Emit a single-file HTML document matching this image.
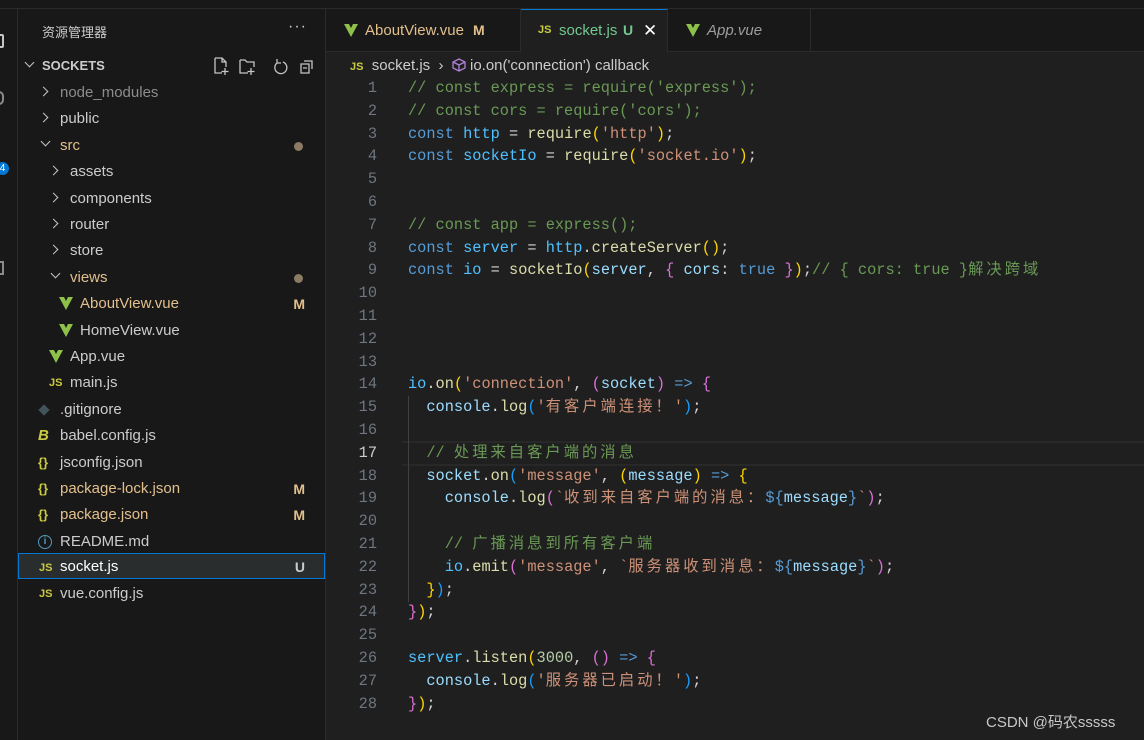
<!DOCTYPE html>
<html><head><meta charset="utf-8"><style>
*{margin:0;padding:0;box-sizing:border-box}
body{width:1144px;height:740px;overflow:hidden;background:#1f1f1f;position:relative;font-family:"Liberation Sans","Noto Sans CJK SC",sans-serif;color:#cccccc}
.abs{position:absolute}
#top{left:0;top:0;width:1144px;height:9px;background:#181818;border-bottom:1px solid #2b2b2b}
#act{left:0;top:9px;width:18px;height:731px;background:#181818;border-right:1px solid #2b2b2b}
#side{left:18px;top:9px;width:308px;height:731px;background:#181818;border-right:1px solid #2b2b2b}
.row{position:absolute;left:18px;width:307px;height:26px;font-size:15px;line-height:26px;white-space:nowrap}
.chev{position:absolute;top:8px;width:7px;height:7px;border-right:1.5px solid #c5c5c5;border-bottom:1.5px solid #c5c5c5}
.r{transform:rotate(-45deg)}
.d{transform:rotate(45deg);top:5px}
.badge{position:absolute;right:20px;font-weight:bold;font-size:14px}
.dot{position:absolute;right:22px;top:9px;width:9px;height:9px;border-radius:50%;background:#8b7b63}
.js{font-weight:bold;font-size:11px;color:#cbcb41;position:absolute}
.br{font-weight:bold;font-size:13px;color:#cbcb41;position:absolute}
#tabs{left:326px;top:9px;width:818px;height:43px;background:#181818;border-bottom:1px solid #2b2b2b}
.tab{position:absolute;top:0;height:43px;font-size:15px;line-height:43px;border-right:1px solid #2b2b2b;white-space:nowrap}
.code{position:absolute;left:326px;width:818px;height:23px;font-family:"Liberation Mono","Noto Sans CJK SC",monospace;font-size:15.3px;line-height:23px;white-space:pre}
.ln{position:absolute;left:0;width:51px;text-align:right;color:#6e7681}
.tx{position:absolute;left:82px}
.z{letter-spacing:3px}
.c{color:#6a9955}.k{color:#569cd6}.v{color:#9cdcfe}.cn{color:#4fc1ff}.f{color:#dcdcaa}.s{color:#ce9178}.p{color:#d4d4d4}.y{color:#ffd700}.m{color:#da70d6}.b{color:#179fff}
</style></head><body>
<div id="top" class="abs"></div>
<div id="act" class="abs">
<div class="abs" style="left:-6px;top:25px;width:10px;height:14px;border:2px solid #c5c5c5;border-radius:2px"></div>
<div class="abs" style="left:-6px;top:82px;width:10px;height:14px;border:2px solid #8a8a8a;border-radius:6px"></div>
<div class="abs" style="left:-4px;top:153px;width:13px;height:13px;border-radius:50%;background:#0078d4;color:#fff;font-size:10px;line-height:13px;text-align:center">4</div>
<div class="abs" style="left:-6px;top:252px;width:10px;height:14px;border:2px solid #8a8a8a"></div>
</div>
<div id="side" class="abs">
<div class="abs" style="left:24px;top:13px;font-size:13px;color:#cccccc">资源管理器</div>
<div class="abs" style="left:270px;top:9px;font-size:16px;letter-spacing:1px;color:#ccc">···</div>
<div class="abs" style="left:6px;top:50px;width:14px"><div class="chev d" style="left:2px;top:0"></div></div>
<div class="abs" style="left:24px;top:49px;font-size:13px;font-weight:bold;color:#ccc">SOCKETS</div>
<svg class="abs" style="left:194px;top:47px" width="106" height="20" fill="none" stroke="#c5c5c5" stroke-width="1.3">
<path d="M3 2h7l4 4v5M3 2v15h7M10 2v4h4M13 12v7M9.5 15.5h7"/>
<path d="M28 4h5l2 2h7v5M28 4v13h8M39 12v7M35.5 15.5h7"/>
<path d="M71 6a6 6 0 1 1-6 1M65 3v4h4"/>
<path d="M92 5h8v8M89 8h8v9h-8zM91 12h4"/>
</svg>
</div>
<!-- rows -->
<div class="row" style="top:80px"><div class="chev r" style="left:22px"></div><span class="abs" style="left:42px;color:#8c8c8c">node_modules</span></div>
<div class="row" style="top:106px"><div class="chev r" style="left:22px"></div><span class="abs" style="left:42px">public</span></div>
<div class="row" style="top:133px"><div class="chev d" style="left:24px"></div><span class="abs" style="left:42px;color:#e2c08d">src</span><div class="dot"></div></div>
<div class="row" style="top:159px"><div class="chev r" style="left:32px"></div><span class="abs" style="left:52px">assets</span></div>
<div class="row" style="top:186px"><div class="chev r" style="left:32px"></div><span class="abs" style="left:52px">components</span></div>
<div class="row" style="top:212px"><div class="chev r" style="left:32px"></div><span class="abs" style="left:52px">router</span></div>
<div class="row" style="top:238px"><div class="chev r" style="left:32px"></div><span class="abs" style="left:52px">store</span></div>
<div class="row" style="top:265px"><div class="chev d" style="left:34px"></div><span class="abs" style="left:52px;color:#e2c08d">views</span><div class="dot"></div></div>
<div class="row" style="top:291px"><svg class="abs" style="left:41px;top:6px" width="14" height="13"><path d="M0 0h5l2 4 2-4h5L7 13z" fill="#8dc149"/></svg><span class="abs" style="left:62px;color:#e2c08d">AboutView.vue</span><span class="badge" style="color:#e2c08d">M</span></div>
<div class="row" style="top:318px"><svg class="abs" style="left:41px;top:6px" width="14" height="13"><path d="M0 0h5l2 4 2-4h5L7 13z" fill="#8dc149"/></svg><span class="abs" style="left:62px">HomeView.vue</span></div>
<div class="row" style="top:344px"><svg class="abs" style="left:31px;top:6px" width="14" height="13"><path d="M0 0h5l2 4 2-4h5L7 13z" fill="#8dc149"/></svg><span class="abs" style="left:52px">App.vue</span></div>
<div class="row" style="top:370px"><span class="js" style="left:31px">JS</span><span class="abs" style="left:52px">main.js</span></div>
<div class="row" style="top:397px"><span class="abs" style="left:22px;top:9px;width:8px;height:8px;background:#41535b;transform:rotate(45deg)"></span><span class="abs" style="left:42px">.gitignore</span></div>
<div class="row" style="top:423px"><span class="abs" style="left:20px;font-style:italic;font-weight:bold;color:#cbcb41">B</span><span class="abs" style="left:42px">babel.config.js</span></div>
<div class="row" style="top:450px"><span class="br" style="left:20px">{}</span><span class="abs" style="left:42px">jsconfig.json</span></div>
<div class="row" style="top:476px"><span class="br" style="left:20px">{}</span><span class="abs" style="left:42px;color:#e2c08d">package-lock.json</span><span class="badge" style="color:#e2c08d">M</span></div>
<div class="row" style="top:502px"><span class="br" style="left:20px">{}</span><span class="abs" style="left:42px;color:#e2c08d">package.json</span><span class="badge" style="color:#e2c08d">M</span></div>
<div class="row" style="top:529px"><span class="abs" style="left:20px;top:6px;width:14px;height:14px;border:1.5px solid #519aba;border-radius:50%;color:#519aba;font-size:10px;line-height:11px;text-align:center;font-weight:bold">i</span><span class="abs" style="left:42px">README.md</span></div>
<div class="row" style="top:553px;height:26px;background:#2a2d2e;border:1px solid #0078d4"><span class="js" style="left:20px;top:1px">JS</span><span class="abs" style="left:41px;top:0px;color:#fff">socket.js</span><span class="badge" style="color:#ccc;top:0px;right:19px">U</span></div>
<div class="row" style="top:581px"><span class="js" style="left:21px">JS</span><span class="abs" style="left:42px">vue.config.js</span></div>

<div id="tabs" class="abs">
<div class="tab" style="left:0;width:195px"><svg class="abs" style="left:18px;top:15px" width="14" height="13"><path d="M0 0h5l2 4 2-4h5L7 13z" fill="#8dc149"/></svg><span class="abs" style="left:39px;color:#e2c08d">AboutView.vue</span><span class="abs" style="left:147px;color:#e2c08d;font-weight:bold;font-size:14px">M</span></div>
<div class="tab" style="left:195px;width:147px;background:#1f1f1f;border-top:1px solid #0078d4;height:44px"><span class="js" style="left:17px;top:-1px">JS</span><span class="abs" style="left:38px;top:-1px;color:#73c991">socket.js</span><span class="abs" style="left:102px;top:-1px;color:#73c991;font-weight:bold;font-size:14px">U</span><span class="abs" style="left:122px;top:-1px;color:#fff;font-size:17px">✕</span></div>
<div class="tab" style="left:342px;width:143px"><svg class="abs" style="left:18px;top:15px" width="14" height="13"><path d="M0 0h5l2 4 2-4h5L7 13z" fill="#8dc149"/></svg><span class="abs" style="left:39px;color:#9d9d9d;font-style:italic">App.vue</span></div>
</div>
<div class="abs" style="left:350px;top:57px;font-size:15px;color:#ccc;white-space:nowrap"><span style="color:#cbcb41;font-weight:bold;font-size:11px">JS</span>&nbsp; socket.js &nbsp;›&nbsp; <svg width="14" height="14" style="vertical-align:-2px"><path d="M7 1l6 3v6l-6 3-6-3V4zM1 4l6 3 6-3M7 7v6" fill="none" stroke="#b180d7" stroke-width="1.3"/></svg> io.on('connection') callback</div>

<div class="abs" style="left:402px;top:441px;width:742px;height:25px;border-top:2px solid #282828;border-bottom:2px solid #282828"></div>
<div class="abs" style="left:408px;top:396px;width:1px;height:206px;background:#404040"></div>

<div class="code" style="top:77px"><span class="ln">1</span><span class="tx c">// const express = require('express');</span></div>
<div class="code" style="top:100px"><span class="ln">2</span><span class="tx c">// const cors = require('cors');</span></div>
<div class="code" style="top:123px"><span class="ln">3</span><span class="tx"><span class="k">const</span> <span class="cn">http</span> <span class="p">=</span> <span class="f">require</span><span class="y">(</span><span class="s">'http'</span><span class="y">)</span><span class="p">;</span></span></div>
<div class="code" style="top:145px"><span class="ln">4</span><span class="tx"><span class="k">const</span> <span class="cn">socketIo</span> <span class="p">=</span> <span class="f">require</span><span class="y">(</span><span class="s">'socket.io'</span><span class="y">)</span><span class="p">;</span></span></div>
<div class="code" style="top:168px"><span class="ln">5</span></div>
<div class="code" style="top:191px"><span class="ln">6</span></div>
<div class="code" style="top:214px"><span class="ln">7</span><span class="tx c">// const app = express();</span></div>
<div class="code" style="top:237px"><span class="ln">8</span><span class="tx"><span class="k">const</span> <span class="cn">server</span> <span class="p">=</span> <span class="cn">http</span><span class="p">.</span><span class="f">createServer</span><span class="y">()</span><span class="p">;</span></span></div>
<div class="code" style="top:259px"><span class="ln">9</span><span class="tx"><span class="k">const</span> <span class="cn">io</span> <span class="p">=</span> <span class="f">socketIo</span><span class="y">(</span><span class="v">server</span><span class="p">,</span> <span class="m">{</span> <span class="v">cors</span><span class="p">:</span> <span class="k">true</span> <span class="m">}</span><span class="y">)</span><span class="p">;</span><span class="c">// { cors: true }<span class="z">解决跨域</span></span></span></div>
<div class="code" style="top:282px"><span class="ln">10</span></div>
<div class="code" style="top:305px"><span class="ln">11</span></div>
<div class="code" style="top:328px"><span class="ln">12</span></div>
<div class="code" style="top:351px"><span class="ln">13</span></div>
<div class="code" style="top:373px"><span class="ln">14</span><span class="tx"><span class="cn">io</span><span class="p">.</span><span class="f">on</span><span class="y">(</span><span class="s">'connection'</span><span class="p">,</span> <span class="m">(</span><span class="v">socket</span><span class="m">)</span> <span class="k">=&gt;</span> <span class="m">{</span></span></div>
<div class="code" style="top:396px"><span class="ln">15</span><span class="tx">  <span class="v">console</span><span class="p">.</span><span class="f">log</span><span class="b">(</span><span class="s">'<span class="z">有客户端连接！</span>'</span><span class="b">)</span><span class="p">;</span></span></div>
<div class="code" style="top:419px"><span class="ln">16</span></div>
<div class="code" style="top:442px"><span class="ln" style="color:#ccc">17</span><span class="tx c">  // <span class="z">处理来自客户端的消息</span></span></div>
<div class="code" style="top:465px"><span class="ln">18</span><span class="tx">  <span class="v">socket</span><span class="p">.</span><span class="f">on</span><span class="b">(</span><span class="s">'message'</span><span class="p">,</span> <span class="y">(</span><span class="v">message</span><span class="y">)</span> <span class="k">=&gt;</span> <span class="y">{</span></span></div>
<div class="code" style="top:487px"><span class="ln">19</span><span class="tx">    <span class="v">console</span><span class="p">.</span><span class="f">log</span><span class="m">(</span><span class="s">`<span class="z">收到来自客户端的消息：</span></span><span class="k">${</span><span class="v">message</span><span class="k">}</span><span class="s">`</span><span class="m">)</span><span class="p">;</span></span></div>
<div class="code" style="top:510px"><span class="ln">20</span></div>
<div class="code" style="top:533px"><span class="ln">21</span><span class="tx c">    // <span class="z">广播消息到所有客户端</span></span></div>
<div class="code" style="top:556px"><span class="ln">22</span><span class="tx">    <span class="cn">io</span><span class="p">.</span><span class="f">emit</span><span class="m">(</span><span class="s">'message'</span><span class="p">,</span> <span class="s">`<span class="z">服务器收到消息：</span></span><span class="k">${</span><span class="v">message</span><span class="k">}</span><span class="s">`</span><span class="m">)</span><span class="p">;</span></span></div>
<div class="code" style="top:579px"><span class="ln">23</span><span class="tx">  <span class="y">}</span><span class="b">)</span><span class="p">;</span></span></div>
<div class="code" style="top:601px"><span class="ln">24</span><span class="tx"><span class="m">}</span><span class="y">)</span><span class="p">;</span></span></div>
<div class="code" style="top:624px"><span class="ln">25</span></div>
<div class="code" style="top:647px"><span class="ln">26</span><span class="tx"><span class="cn">server</span><span class="p">.</span><span class="f">listen</span><span class="y">(</span><span class="s" style="color:#b5cea8">3000</span><span class="p">,</span> <span class="m">()</span> <span class="k">=&gt;</span> <span class="m">{</span></span></div>
<div class="code" style="top:670px"><span class="ln">27</span><span class="tx">  <span class="v">console</span><span class="p">.</span><span class="f">log</span><span class="b">(</span><span class="s">'<span class="z">服务器已启动！</span>'</span><span class="b">)</span><span class="p">;</span></span></div>
<div class="code" style="top:693px"><span class="ln">28</span><span class="tx"><span class="m">}</span><span class="y">)</span><span class="p">;</span></span></div>
<div class="abs" style="left:986px;top:711px;font-size:15px;color:#c8c8c8">CSDN @码农sssss</div>
</body></html>
